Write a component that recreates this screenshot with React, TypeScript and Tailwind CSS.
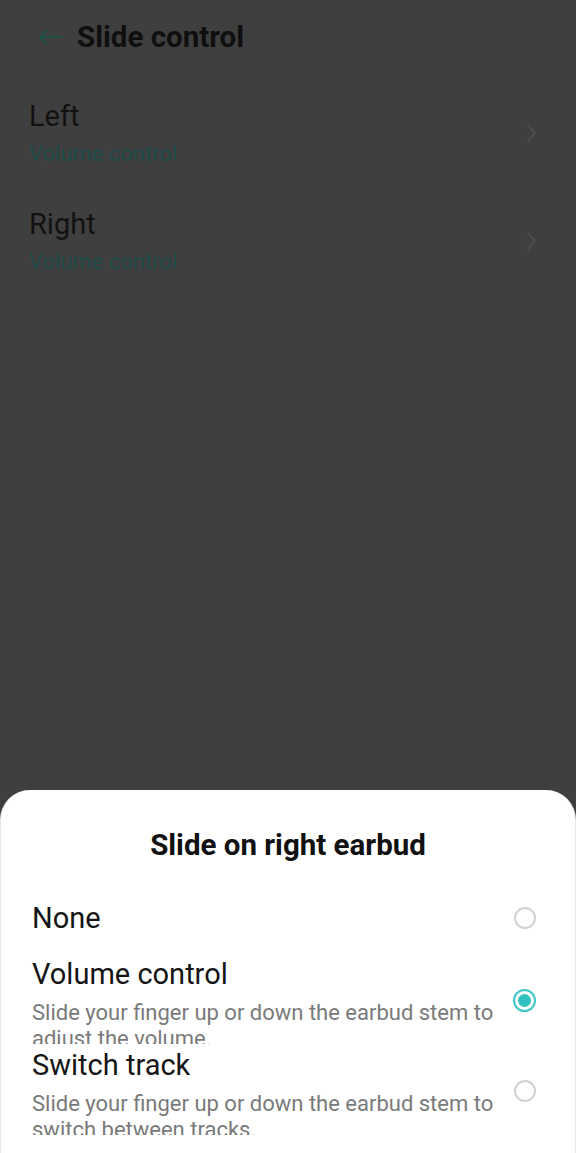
const options = [
  { key: "none", title: "None", desc: "" },
  {
    key: "volume",
    title: "Volume control",
    desc: "Slide your finger up or down the earbud stem to adjust the volume.",
  },
  {
    key: "track",
    title: "Switch track",
    desc: "Slide your finger up or down the earbud stem to switch between tracks.",
  },
];

const Chevron = () => (
  <svg width="12" height="20" viewBox="0 0 12 20" fill="none">
    <path d="M2 2l7 8-7 8" stroke="#4d4d4d" strokeWidth="2" strokeLinecap="round" strokeLinejoin="round" />
  </svg>
);

const Radio = ({ checked }: { checked: boolean }) =>
  checked ? (
    <div className="w-[23px] h-[23px] rounded-full border-2 border-[#3cc7c6] flex items-center justify-center">
      <div className="w-[13px] h-[13px] rounded-full bg-[#33c1c0]" />
    </div>
  ) : (
    <div className="w-[22px] h-[22px] rounded-full border-2 border-[#d2d2d2]" />
  );

export default function App() {
  const selected = "volume";

  return (
    <div className="h-[1153px] w-[576px] flex flex-col bg-[#3f3f3f] overflow-hidden font-['Roboto',sans-serif]">
      <div className="flex-1">
        <div className="flex items-center h-[36px] mt-[19px] pl-[36px]">
          <svg width="28" height="20" viewBox="0 0 28 20" fill="none">
            <path d="M26 10H4M11 3L4 10l7 7" stroke="#1f5045" strokeWidth="1.8" strokeLinecap="round" strokeLinejoin="round" />
          </svg>
          <h1 className="ml-[13px] text-[29.5px] leading-[36px] font-bold text-[#0f0f0f]">Slide control</h1>
        </div>

        <div className="mt-[43px] pl-[29px] pr-[38px] flex flex-col gap-[39px]">
          {["Left", "Right"].map((side) => (
            <div key={side} className="flex items-center justify-between">
              <div>
                <div className="text-[29px] leading-[36px] text-[#121212]">{side}</div>
                <div className="mt-[7px] text-[22px] leading-[26px] text-[#1f4b49]">Volume control</div>
              </div>
              <Chevron />
            </div>
          ))}
        </div>
      </div>

      <div className="h-[363px] bg-white rounded-t-[30px] border-x border-[#e6e6e6] pt-[37px]">
        <h2 className="text-center text-[29.5px] leading-[36px] font-bold text-[#111]">Slide on right earbud</h2>

        <div className="mt-[37px] pl-[31px] pr-[39px]">
          {options.map((opt, i) => (
            <div
              key={opt.key}
              className={`flex items-center justify-between ${i === 1 ? "mt-[20px]" : i === 2 ? "mt-[3px]" : ""}`}
            >
              <div className="w-[472px]">
                <div className="text-[29px] leading-[36px] text-[#151515]">{opt.title}</div>
                {opt.desc && (
                  <div className="mt-[8px] h-[44px] overflow-hidden text-[22px] leading-[26px] text-[#7a7a7a]">
                    {opt.desc}
                  </div>
                )}
              </div>
              <Radio checked={opt.key === selected} />
            </div>
          ))}
        </div>
      </div>
    </div>
  );
}
